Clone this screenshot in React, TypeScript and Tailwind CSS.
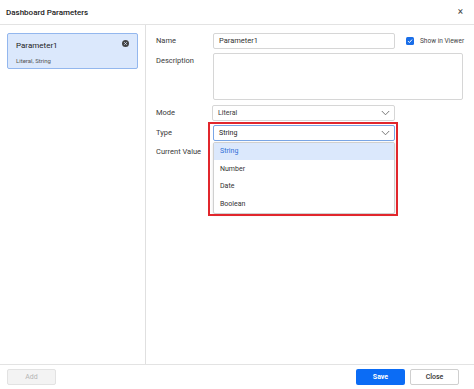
import React from "react";

const font = { fontFamily: "Roboto, 'Noto Sans', Arial, sans-serif" };

function Chevron() {
  return (
    <svg width="9" height="6" viewBox="0 0 9 6" fill="none">
      <path d="M0.8 1 L4.5 4.8 L8.2 1" stroke="#6b6b6b" strokeWidth="0.9" />
    </svg>
  );
}

export default function App() {
  return (
    <div
      className="w-[474px] h-[389px] bg-white flex flex-col text-[#3a3a3a] overflow-hidden"
      style={font}
    >
      {/* Header */}
      <div className="h-[25px] border-b border-[#e3e3e3] flex items-center justify-between pl-[6px] pr-[11px] shrink-0">
        <span className="text-[8px] font-medium text-[#222] leading-none mt-[1px]">Dashboard Parameters</span>
        <span className="text-[10px] text-[#444] leading-none">×</span>
      </div>

      {/* Body */}
      <div className="flex flex-1 min-h-0">
        {/* Left */}
        <div className="w-[146px] shrink-0 border-r border-[#e0e0e0] pt-[8px] pl-[7px] pr-[7px]">
          <div className="h-[36px] bg-[#dbe8fc] border border-[#93b7ee] rounded-[2px] pl-[8px] pr-[8px] pt-[7px] relative">
            <div className="text-[8px] text-[#222] leading-none mt-[1px]">Parameter1</div>
            <div className="text-[6px] text-[#555] leading-none mt-[8px]">Literal, String</div>
            <div className="absolute right-[8px] top-[6px] w-[7px] h-[7px] rounded-full bg-[#444] flex items-center justify-center">
              <svg width="5" height="5" viewBox="0 0 5 5">
                <path d="M1.3 1.3 L3.7 3.7 M3.7 1.3 L1.3 3.7" stroke="#dbe8fc" strokeWidth="0.9" />
              </svg>
            </div>
          </div>
        </div>

        {/* Right */}
        <div className="flex-1 pt-[8px] pl-[10px] flex flex-col">
          {/* Name */}
          <div className="flex items-center h-[16px]">
            <div className="w-[57px] text-[7.5px] leading-none">Name</div>
            <div className="w-[182px] h-[16px] border border-[#d6d6d6] rounded-[2px] flex items-center pl-[5px] text-[7.5px] text-[#333]">
              Parameter1
            </div>
            <div className="ml-[11px] w-[8px] h-[8px] bg-[#1a6ee8] rounded-[1.5px] flex items-center justify-center">
              <svg width="6" height="6" viewBox="0 0 6 6">
                <path d="M1 3.1 L2.4 4.5 L5 1.6" stroke="white" strokeWidth="1" fill="none" />
              </svg>
            </div>
            <span className="ml-[6px] text-[6.5px] text-[#444] leading-none">Show in Viewer</span>
          </div>

          {/* Description */}
          <div className="flex mt-[4px]">
            <div className="w-[57px] text-[7.5px] leading-none pt-[4px]">Description</div>
            <div className="w-[250px] h-[47px] border border-[#d6d6d6] rounded-[2px]" />
          </div>

          {/* Mode */}
          <div className="flex items-center h-[16px] mt-[5px]">
            <div className="w-[56px] text-[7.5px] leading-none">Mode</div>
            <div className="w-[183px] h-[16px] border border-[#d6d6d6] rounded-[2px] flex items-center justify-between pl-[5px] pr-[4px] text-[7px]">
              <span>Literal</span>
              <Chevron />
            </div>
          </div>

          {/* Type */}
          <div className="flex items-center h-[16px] mt-[4px]">
            <div className="w-[57px] text-[7.5px] leading-none">Type</div>
            <div className="relative w-[182px] h-[16px]">
              <div className="w-[182px] h-[16px] border border-[#7aa6e6] rounded-[2px] flex items-center justify-between pl-[5px] pr-[4px] text-[7px] text-[#222]">
                <span>String</span>
                <Chevron />
              </div>
              {/* dropdown popup */}
              <div className="absolute left-0 top-[17px] w-[182px] h-[72px] bg-white border border-[#d0d0d0] rounded-[2px] shadow-[0_1px_3px_rgba(0,0,0,0.12)] flex flex-col text-[7px] text-[#333] z-10">
                <div className="h-[17px] bg-[#dbe8fc] flex items-center pl-[6px] text-[#2f6fd6]">String</div>
                <div className="h-[18px] flex items-center pl-[6px]">Number</div>
                <div className="h-[17px] flex items-center pl-[6px]">Date</div>
                <div className="h-[18px] flex items-center pl-[6px]">Boolean</div>
              </div>
              {/* red annotation */}
              <div className="absolute left-[-5px] top-[-3px] w-[190px] h-[94px] border-2 border-[#e1262c] z-20 pointer-events-none" />
            </div>
          </div>

          {/* Current Value */}
          <div className="flex items-center h-[16px] mt-[3px]">
            <div className="w-[57px] text-[7.5px] leading-none whitespace-nowrap">Current Value</div>
          </div>
        </div>
      </div>

      {/* Footer */}
      <div className="h-[25px] border-t border-[#e3e3e3] flex items-center justify-between pl-[7px] pr-[15px] shrink-0">
        <div className="w-[49px] h-[16px] bg-[#f3f3f3] border border-[#e2e2e2] rounded-[2px] flex items-center justify-center text-[7px] text-[#b5b5b5]">
          Add
        </div>
        <div className="flex gap-[5px]">
          <div className="w-[49px] h-[16px] bg-[#0b6cf5] rounded-[2px] flex items-center justify-center text-[7px] font-bold text-white">
            Save
          </div>
          <div className="w-[49px] h-[16px] bg-white border border-[#cfcfcf] rounded-[2px] flex items-center justify-center text-[7px] font-medium text-[#333]">
            Close
          </div>
        </div>
      </div>
    </div>
  );
}
